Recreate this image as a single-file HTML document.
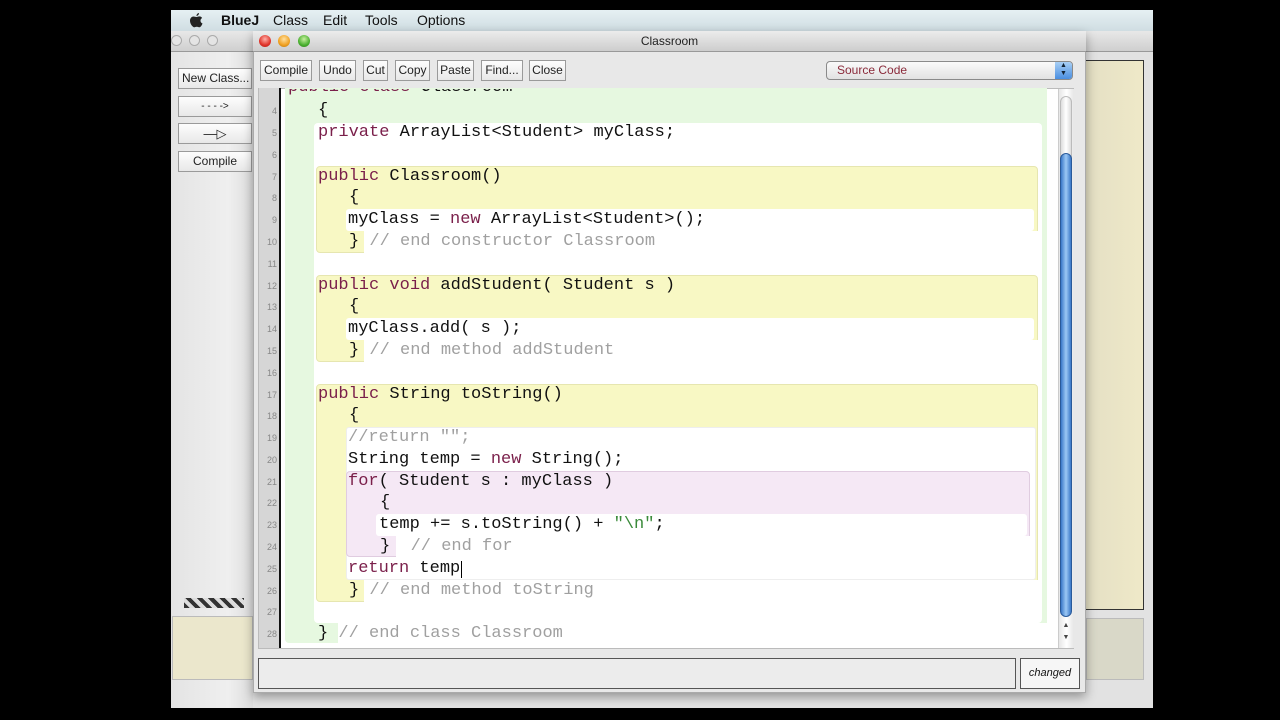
<!DOCTYPE html>
<html><head><meta charset="utf-8"><style>
*{margin:0;padding:0;box-sizing:border-box}
body{width:1280px;height:720px;background:#000;position:relative;overflow:hidden;font-family:"Liberation Sans",sans-serif}
.a{position:absolute}
.btn{position:absolute;height:21px;border:1px solid #9a9a9a;background:linear-gradient(#fdfdfd,#e8e8e8);font-size:12px;line-height:19px;text-align:center;color:#222}
.ln{position:absolute;left:258px;width:19px;text-align:right;font-size:9px;color:#888;height:22px;line-height:22px}
.code{position:absolute;font-family:"Liberation Mono",monospace;font-size:17px;height:22px;line-height:22px;white-space:pre;color:#111}
.k{color:#7a1f4a}.c{color:#a0a0a0}.s{color:#3a8a3a}
</style></head><body>
<div class="a" style="left:171px;top:10px;width:982px;height:21px;background:linear-gradient(#e6f0f3,#cfdde2);font-size:14px;color:#111;line-height:21px">
 <svg class="a" style="left:19px;top:3px" width="13" height="15" viewBox="0 0 13 15"><path d="M9 0c0 1.5-1 2.8-2.5 3C6.4 1.6 7.5 0.2 9 0z M6.5 4c1 0 1.8-.6 2.8-.6 1.2 0 2.2.6 2.8 1.6-2.4 1.3-2 4.6.4 5.5-.6 1.6-1.8 3.8-3.1 3.8-1 0-1.3-.6-2.6-.6s-1.7.6-2.7.6C2.8 14.3 0 11 0 7.8 0 5 1.8 3.5 3.5 3.5c1.2 0 2 .5 3 .5z" fill="#222"/></svg>
 <span class="a" style="left:50px;font-weight:bold">BlueJ</span>
 <span class="a" style="left:102px">Class</span>
 <span class="a" style="left:152px">Edit</span>
 <span class="a" style="left:194px">Tools</span>
 <span class="a" style="left:246px">Options</span>
</div>
<div class="a" style="left:171px;top:31px;width:982px;height:677px;background:#e2e2e2"></div>
<div class="a" style="left:171px;top:31px;width:982px;height:21px;background:linear-gradient(#e8e8e8,#cfcfcf);border-bottom:1px solid #999"></div>
<div class="a" style="left:171px;top:35px;width:11px;height:11px;border-radius:50%;border:1px solid #aaa;background:#e4e4e4"></div>
<div class="a" style="left:189px;top:35px;width:11px;height:11px;border-radius:50%;border:1px solid #aaa;background:#e4e4e4"></div>
<div class="a" style="left:207px;top:35px;width:11px;height:11px;border-radius:50%;border:1px solid #aaa;background:#e4e4e4"></div>
<div class="a" style="left:171px;top:52px;width:82px;height:656px;background:linear-gradient(90deg,#e4e4e4,#efefef 70%,#dcdcdc)"></div>
<div class="btn" style="left:178px;top:68px;width:74px;text-align:left;padding-left:3px">New Class...</div>
<div class="btn" style="left:178px;top:96px;width:74px;font-size:10px">- - - -&gt;</div>
<div class="btn" style="left:178px;top:123px;width:74px;font-size:13px">&#8212;&#9655;</div>
<div class="btn" style="left:178px;top:151px;width:74px">Compile</div>
<div class="a" style="left:184px;top:598px;width:60px;height:10px;background:repeating-linear-gradient(45deg,#333 0 4px,#ddd 4px 8px)"></div>
<div class="a" style="left:172px;top:616px;width:81px;height:64px;background:#ebe7cc;border:1px solid #bbb"></div>
<div class="a" style="left:1086px;top:60px;width:58px;height:550px;background:linear-gradient(90deg,#e4dfc4,#efe9c8);border:1px solid #333;border-left:none"></div>
<div class="a" style="left:1086px;top:618px;width:58px;height:62px;background:#d9d8c8;border:1px solid #bbb"></div>
<div class="a" style="left:1075px;top:366px;width:0;height:0;border-top:4px solid transparent;border-bottom:4px solid transparent;border-right:5px solid #222"></div>

<div class="a" style="left:253px;top:31px;width:833px;height:662px;background:#e8e8e8;border:1px solid #aaa;box-shadow:0 4px 10px rgba(0,0,0,.35)"></div>
<div class="a" style="left:253px;top:31px;width:833px;height:21px;background:linear-gradient(#ececec,#cdcdcd);border-bottom:1px solid #999;text-align:center;font-size:12px;line-height:21px;color:#222">Classroom</div>
<div class="a" style="left:259px;top:35px;width:12px;height:12px;border-radius:50%;background:radial-gradient(circle at 50% 35%,#ffb0a8,#e0342a 60%,#a8201a)"></div>
<div class="a" style="left:278px;top:35px;width:12px;height:12px;border-radius:50%;background:radial-gradient(circle at 50% 35%,#ffe0a0,#f0a020 60%,#b07010)"></div>
<div class="a" style="left:298px;top:35px;width:12px;height:12px;border-radius:50%;background:radial-gradient(circle at 50% 35%,#c8f0a0,#4ab030 60%,#2a7a18)"></div>
<div class="btn" style="left:260px;top:60px;width:52px">Compile</div>
<div class="btn" style="left:319px;top:60px;width:37px">Undo</div>
<div class="btn" style="left:363px;top:60px;width:25px">Cut</div>
<div class="btn" style="left:395px;top:60px;width:35px">Copy</div>
<div class="btn" style="left:437px;top:60px;width:37px">Paste</div>
<div class="btn" style="left:481px;top:60px;width:42px">Find...</div>
<div class="btn" style="left:529px;top:60px;width:37px">Close</div>
<div class="a" style="left:826px;top:61px;width:247px;height:19px;border:1px solid #8a8a8a;border-radius:4px;background:linear-gradient(#fafafa,#e2e2e2);font-size:12px;line-height:17px;color:#8a2a3a;padding-left:10px">Source Code</div>
<div class="a" style="left:1055px;top:62px;width:17px;height:17px;border-radius:0 3px 3px 0;background:linear-gradient(#a8cff5,#4a8ee0);font-size:7px;color:#123;text-align:center;line-height:8px">&#9650;<br>&#9660;</div>

<div class="a" style="left:258px;top:88px;width:816px;height:561px;background:#fff;border:1px solid #bbb"></div>
<div class="a" style="left:259px;top:88px;width:20px;height:560px;background:#d6d6d6"></div>
<div class="a" style="left:279px;top:88px;width:2px;height:560px;background:#111"></div>
<div class="a" style="left:285px;top:88px;width:762px;height:555px;background:#e6f8e0;border-radius:0 0 4px 4px"></div>
<div class="a" style="left:314px;top:123px;width:728px;height:500px;background:#fff;border-radius:4px"></div>
<div class="a" style="left:338px;top:623px;width:709px;height:22px;background:#fff"></div>
<div class="a" style="left:316px;top:166px;width:722px;height:87px;background:#f8f8c4;border:1px solid #e6e6b0;border-radius:4px"></div>
<div class="a" style="left:346px;top:209px;width:688px;height:22px;background:#fff;border-radius:3px"></div>
<div class="a" style="left:364px;top:231px;width:676px;height:23px;background:#fff"></div>
<div class="a" style="left:316px;top:275px;width:722px;height:87px;background:#f8f8c4;border:1px solid #e6e6b0;border-radius:4px"></div>
<div class="a" style="left:346px;top:318px;width:688px;height:22px;background:#fff;border-radius:3px"></div>
<div class="a" style="left:364px;top:340px;width:676px;height:23px;background:#fff"></div>
<div class="a" style="left:316px;top:384px;width:722px;height:218px;background:#f8f8c4;border:1px solid #e6e6b0;border-radius:4px"></div>
<div class="a" style="left:346px;top:427px;width:690px;height:153px;background:#fff;border:1px solid #eee;border-radius:3px"></div>
<div class="a" style="left:364px;top:580px;width:676px;height:23px;background:#fff"></div>
<div class="a" style="left:346px;top:471px;width:684px;height:86px;background:#f5e8f5;border:1px solid #e0cce0;border-radius:4px"></div>
<div class="a" style="left:376px;top:514px;width:651px;height:22px;background:#fff;border-radius:3px"></div>
<div class="a" style="left:396px;top:536px;width:634px;height:21px;background:#fff"></div>

<div class="a" style="left:285px;top:89px;width:400px;height:9px;overflow:hidden"><div class="code" style="left:3px;top:-12px"><span class="k">public</span> <span class="k">class</span> Classroom</div></div>
<div class="code" style="left:318px;top:100px">{</div>
<div class="code" style="left:318px;top:122px"><span class="k">private</span> ArrayList&lt;Student&gt; myClass;</div>
<div class="code" style="left:318px;top:166px"><span class="k">public</span> Classroom()</div>
<div class="code" style="left:349px;top:187px">{</div>
<div class="code" style="left:348px;top:209px">myClass = <span class="k">new</span> ArrayList&lt;Student&gt;();</div>
<div class="code" style="left:349px;top:231px">} <span class="c">// end constructor Classroom</span></div>
<div class="code" style="left:318px;top:275px"><span class="k">public</span> <span class="k">void</span> addStudent( Student s )</div>
<div class="code" style="left:349px;top:296px">{</div>
<div class="code" style="left:348px;top:318px">myClass.add( s );</div>
<div class="code" style="left:349px;top:340px">} <span class="c">// end method addStudent</span></div>
<div class="code" style="left:318px;top:384px"><span class="k">public</span> String toString()</div>
<div class="code" style="left:349px;top:405px">{</div>
<div class="code" style="left:348px;top:427px"><span class="c">//return "";</span></div>
<div class="code" style="left:348px;top:449px">String temp = <span class="k">new</span> String();</div>
<div class="code" style="left:348px;top:471px"><span class="k">for</span>( Student s : myClass )</div>
<div class="code" style="left:380px;top:492px">{</div>
<div class="code" style="left:379px;top:514px">temp += s.toString() + <span class="s">"\n"</span>;</div>
<div class="code" style="left:380px;top:536px">}  <span class="c">// end for</span></div>
<div class="code" style="left:348px;top:558px"><span class="k">return</span> temp</div>
<div class="a" style="left:461px;top:561px;width:1px;height:17px;background:#000"></div>
<div class="code" style="left:349px;top:580px">} <span class="c">// end method toString</span></div>
<div class="code" style="left:318px;top:623px">} <span class="c">// end class Classroom</span></div>

<div class="ln" style="top:100px">4</div><div class="ln" style="top:122px">5</div><div class="ln" style="top:144px">6</div><div class="ln" style="top:166px">7</div><div class="ln" style="top:187px">8</div><div class="ln" style="top:209px">9</div><div class="ln" style="top:231px">10</div><div class="ln" style="top:253px">11</div><div class="ln" style="top:275px">12</div><div class="ln" style="top:296px">13</div><div class="ln" style="top:318px">14</div><div class="ln" style="top:340px">15</div><div class="ln" style="top:362px">16</div><div class="ln" style="top:384px">17</div><div class="ln" style="top:405px">18</div><div class="ln" style="top:427px">19</div><div class="ln" style="top:449px">20</div><div class="ln" style="top:471px">21</div><div class="ln" style="top:492px">22</div><div class="ln" style="top:514px">23</div><div class="ln" style="top:536px">24</div><div class="ln" style="top:558px">25</div><div class="ln" style="top:580px">26</div><div class="ln" style="top:601px">27</div><div class="ln" style="top:623px">28</div>

<div class="a" style="left:1058px;top:89px;width:16px;height:559px;background:linear-gradient(90deg,#e6e6e6,#fff,#e6e6e6);border-left:1px solid #ccc"></div>
<div class="a" style="left:1060px;top:96px;width:12px;height:520px;border:1px solid #bbb;border-radius:6px;background:linear-gradient(90deg,#ddd,#fff,#ddd)"></div>
<div class="a" style="left:1060px;top:153px;width:12px;height:464px;border-radius:6px;background:linear-gradient(90deg,#3a78c8,#9cc8f4 50%,#3a78c8);border:1px solid #2a5a9a"></div>
<div class="a" style="left:1060px;top:620px;width:12px;height:26px;font-size:7px;color:#444;text-align:center;line-height:12px">&#9650;<br>&#9660;</div>

<div class="a" style="left:258px;top:658px;width:758px;height:31px;background:#ececec;border:1px solid #555"></div>
<div class="a" style="left:1020px;top:658px;width:60px;height:31px;background:#f6f6f6;border:1px solid #555;font-size:11px;font-style:italic;text-align:center;line-height:29px;color:#111">changed</div>
</body></html>
